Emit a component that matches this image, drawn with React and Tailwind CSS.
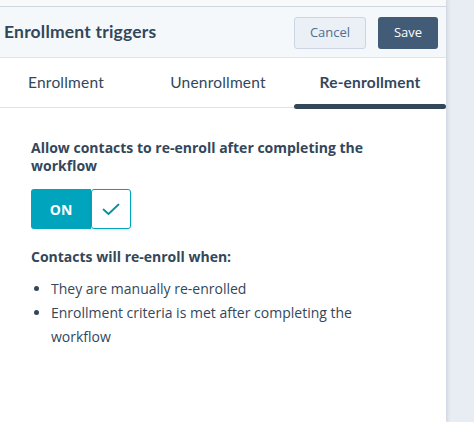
import React from "react";

export default function App() {
  const font = { fontFamily: '"Open Sans", "Noto Sans", sans-serif' };
  const lato = { fontFamily: 'Lato, "Open Sans", sans-serif' };
  return (
    <div className="w-[474px] h-[422px] overflow-hidden flex bg-[#e8edf4] text-[#33475b]" style={font}>
      <div className="w-[456px] -ml-[10px] shrink-0 flex flex-col bg-white shadow-[2px_0_3px_rgba(45,62,80,0.12)]">
        <div className="h-[7px] bg-[#f7f9fb] border-b border-[#cfd6de]" />
        <div className="h-[51px] bg-[#f5f8fa] border-b border-[#dfe3eb] flex items-center justify-between pl-[14px] pr-[8px]">
          <div className="text-[17.5px] font-bold tracking-[0.2px]" style={lato}>Enrollment triggers</div>
          <div className="flex gap-[12px] pt-[1px]">
            <button className="w-[72px] h-[32px] rounded-[3px] bg-[#eaf0f6] border border-[#cbd6e2] text-[13px] text-[#506e91]">Cancel</button>
            <button className="w-[60px] h-[32px] rounded-[3px] bg-[#425b76] text-[13px] text-white">Save</button>
          </div>
        </div>
        <div className="flex h-[50px] border-b border-[#dfe3eb]" style={lato}>
          <div className="w-[152px] flex items-center justify-center text-[15.5px] tracking-[0.2px]">Enrollment</div>
          <div className="w-[152px] flex items-center justify-center text-[15.5px] tracking-[0.2px]">Unenrollment</div>
          <div className="w-[152px] flex flex-col items-center justify-center text-[15.5px] tracking-[0.2px] font-bold relative">
            Re-enrollment
            <div className="absolute left-0 right-0 -bottom-[2px] h-[5px] rounded-full bg-[#33475b]" />
          </div>
        </div>
        <div className="pl-[41px] pr-[60px] pt-[31px]">
          <div className="text-[14px] font-bold leading-[18px] w-[340px]">
            Allow contacts to re-enroll after completing the workflow
          </div>
          <div className="mt-[14px] flex w-[100px] h-[40px]">
            <div className="w-[60px] bg-[#00a4bd] rounded-l-[3px] flex items-center justify-center text-white text-[14px] font-bold">ON</div>
            <div className="w-[40px] bg-white border border-[#00a4bd] rounded-[3px] flex items-center justify-center shadow-[0_1px_3px_rgba(0,0,0,0.1)]">
              <svg width="20" height="16" viewBox="0 0 20 16" fill="none">
                <path d="M2.5 8.5 L7.5 13 L17.5 3.5" stroke="#0b8fa3" strokeWidth="1.8" strokeLinecap="round" strokeLinejoin="round" />
              </svg>
            </div>
          </div>
          <div className="mt-[19px] text-[14px] font-bold leading-[18px]">Contacts will re-enroll when:</div>
          <ul className="mt-[11px] list-disc pl-[20px] text-[14px] leading-[24px] w-[340px]">
            <li>They are manually re-enrolled</li>
            <li>Enrollment criteria is met after completing the workflow</li>
          </ul>
        </div>
      </div>
    </div>
  );
}
